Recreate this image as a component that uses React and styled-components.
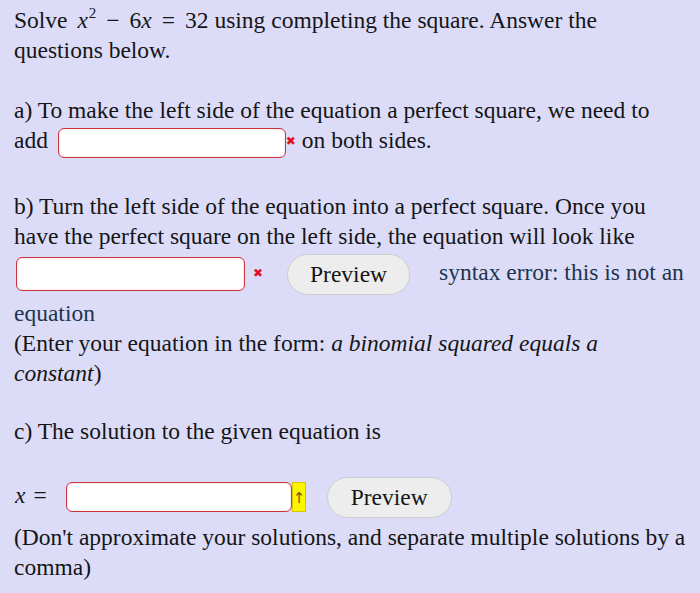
import React from 'react'
import styled, { createGlobalStyle } from 'styled-components'

const Global = createGlobalStyle`
  html, body {
    margin: 0;
    padding: 0;
    background: #dcdcf9;
  }
`

const Page = styled.div`
  box-sizing: border-box;
  width: 700px;
  min-height: 593px;
  padding: 5px 12px 0 14px;
  background: #dcdcf9;
  color: #151515;
  font-family: "Liberation Serif", "Times New Roman", serif;
  font-size: 23.5px;
  line-height: 30px;
`

const Para = styled.div`
  margin-bottom: ${p => p.$gap || 0}px;
`

const Var = styled.span`
  font-style: italic;
  font-family: "Liberation Serif", serif;
  margin: ${p => p.$m || '0'};
`

const Sup = styled.sup`
  font-size: 15px;
  line-height: 0;
  vertical-align: 10px;
  margin-left: 1px;
`

const Op = styled.span`
  display: inline-block;
  margin: 0 ${p => p.$space || 10}px;
`

const Input = styled.span`
  display: inline-block;
  box-sizing: border-box;
  width: ${p => p.$w}px;
  height: ${p => p.$h || 30}px;
  vertical-align: middle;
  background: #fff;
  border: 1.5px solid #c9343f;
  border-radius: 6px;
  box-shadow: inset 0 0 2px rgba(220, 80, 90, 0.35);
  margin: ${p => p.$m || '0'};
`

const Cross = styled.span`
  display: inline-block;
  color: #e0101e;
  font-family: "DejaVu Sans", sans-serif;
  font-size: 12px;
  line-height: 12px;
  font-weight: bold;
  vertical-align: 3px;
  margin: ${p => p.$m || '0'};
`

const Preview = styled.button`
  display: inline-block;
  box-sizing: border-box;
  width: ${p => p.$w}px;
  height: 41px;
  vertical-align: middle;
  padding: 0;
  margin: ${p => p.$m || '0'};
  background: #ededed;
  border: 1px solid #cdcdcd;
  border-radius: 21px;
  color: #151515;
  font-family: "Liberation Serif", "Times New Roman", serif;
  font-size: 23.5px;
  line-height: 39px;
`

const ErrorText = styled.span`
  color: #20354d;
`

const Flag = styled.span`
  display: inline-block;
  box-sizing: border-box;
  width: 14px;
  height: 30px;
  vertical-align: middle;
  background: #fbf600;
  border: 1px solid #d8c400;
  color: #7a4a10;
  font-family: "DejaVu Sans", sans-serif;
  font-size: 15px;
  line-height: 30px;
  text-align: center;
  margin-right: 21px;
`

export default function App() {
  return (
    <Page>
      <Global />
      <Para $gap={30}>
        Solve <Var $m="0 0 0 4px">x</Var><Sup>2</Sup><Op>−</Op>6<Var>x</Var>
        <Op>=</Op>32 using completing the square. Answer the questions below.
      </Para>
      <Para $gap={33}>
        a) To make the left side of the equation a perfect square, we need to add{' '}
        <Input $w={228} $m="0 0 0 4px" />
        <Cross>✖</Cross> on both sides.
      </Para>
      <Para $gap={28}>
        b) Turn the left side of the equation into a perfect square. Once you have
        the perfect square on the left side, the equation will look like{' '}
        <Input $w={229} $h={34} $m="0 0 0 2px" />
        <Cross $m="0 0 0 8px">✖</Cross>
        <Preview $w={123} $m="3px 29px 3px 24px">Preview</Preview>
        <ErrorText>syntax error: this is not an equation</ErrorText>
        <br />
        (Enter your equation in the form: <i>a binomial squared equals a constant</i>)
      </Para>
      <Para $gap={27}>c) The solution to the given equation is</Para>
      <Para>
        <Var $m="0 0 0 1px">x</Var><Op $space={8}>=</Op>
        <Input $w={226} $m="0 0 0 11px" />
        <Flag>↑</Flag>
        <Preview $w={125} $m="4px 0 4px 0">Preview</Preview>
        <br />
        (Don't approximate your solutions, and separate multiple solutions by a comma)
      </Para>
    </Page>
  )
}
